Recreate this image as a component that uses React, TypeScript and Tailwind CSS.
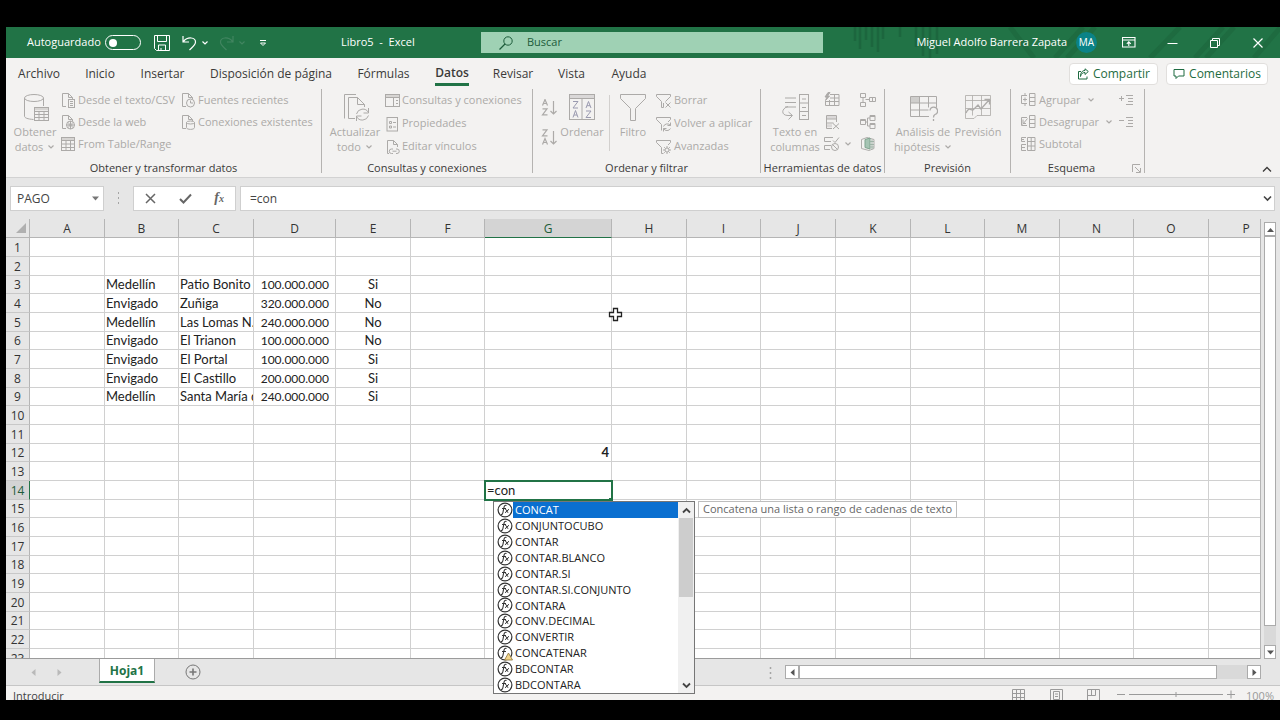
import type { ReactNode } from "react";

/* ---------- drawing helpers ---------- */

function Svg({ w, h, className = "", children }: { w: number; h: number; className?: string; children: ReactNode }) {
  return (
    <svg
      width={w}
      height={h}
      viewBox={`0 0 ${w} ${h}`}
      fill="none"
      stroke="currentColor"
      strokeWidth="1"
      className={`shrink-0 ${className}`}
      aria-hidden="true"
    >
      {children}
    </svg>
  );
}

const Chevron = ({ className = "" }: { className?: string }) => (
  <Svg w={8} h={6} className={className}>
    <path d="M1.500 1.500 4 4l2.500-2.500" strokeWidth="1.200" />
  </Svg>
);

/* ---------- small ribbon icons (16 x 16) ---------- */

const pageOutline = "M6 14.500H2.500v-13h6l4 4V7M8.500 1.500v4h4";

const icons = {
  textCsv: (
    <Svg w={16} h={16}>
      <path d={pageOutline} />
      <rect x="8.500" y="7.500" width="6" height="8" />
      <path d="M10 9.500h3M10 11.500h3M10 13.500h3" />
    </Svg>
  ),
  web: (
    <Svg w={16} h={16}>
      <path d={pageOutline} />
      <circle cx="10.500" cy="11" r="4" />
      <path d="M6.500 11h8M10.500 7v8M8.500 8.500c1 1.500 1 3.500 0 5M12.500 8.500c-1 1.500-1 3.500 0 5" />
    </Svg>
  ),
  table: (
    <Svg w={16} h={16}>
      <rect x="1.500" y="1.500" width="13" height="13" />
      <path d="M1.500 4.500h13M1.500 8h13M1.500 11.500h13M6 4.500v10M10.500 4.500v10" />
      <path d="M2 3h12" strokeWidth="2" opacity=".4" />
    </Svg>
  ),
  recent: (
    <Svg w={16} h={16}>
      <path d={pageOutline} />
      <circle cx="10.500" cy="11" r="4" />
      <path d="M10.500 8.500V11H13" />
    </Svg>
  ),
  existing: (
    <Svg w={16} h={16}>
      <path d={pageOutline} />
      <ellipse cx="10.500" cy="8.500" rx="4" ry="1.500" />
      <path d="M6.500 8.500v5c0 2.500 8 2.500 8 0v-5" />
    </Svg>
  ),
  queries: (
    <Svg w={16} h={16}>
      <rect x="1.500" y="1.500" width="14" height="12" />
      <path d="M1.500 4.500h14M9.500 4.500v9M12 7.500h2M12 10.500h2" />
      <path d="M2 3h13" strokeWidth="2" opacity=".4" />
    </Svg>
  ),
  properties: (
    <Svg w={16} h={16}>
      <rect x="3" y="1.500" width="10.500" height="13.500" />
      <path d="M5.500 5.500h2v2h-2zM5.500 10h2v2h-2zM9 6.500h3M9 11h3" />
    </Svg>
  ),
  links: (
    <Svg w={16} h={16}>
      <path d="M5 14.500H3.500v-13h6l4 4V8M9.500 1.500v4h4" />
      <path d="M9 14.500H7.500a2 2 0 0 1 0-4.500H9M12 10h1a2 2 0 0 1 0 4.500h-1M8.500 12.200h4" />
    </Svg>
  ),
  clear: (
    <Svg w={16} h={16}>
      <path d="M.5 1.500h14v2L9.500 8.500M.5 1.500v2l5 5v6h2V10M9.500 9.500l5 5M14.500 9.500l-5 5" />
    </Svg>
  ),
  reapply: (
    <Svg w={16} h={16}>
      <path d="M.5 1.500h14v2L12 6M.5 1.500v2l5 5v6" />
      <path d="M14.500 9.500a4 4 0 0 0-7 1M14.500 6.500v3h-3M7.500 12.500a4 4 0 0 0 7 0M7.500 15.500v-3h3" />
    </Svg>
  ),
  advanced: (
    <Svg w={16} h={16}>
      <path d="M.5 1.500h14v2L12 6M.5 1.500v2l5 5v6h2" />
      <circle cx="11" cy="11" r="2" />
      <path d="M11 7v2M11 13v2M7 11h2M13 11h2M8.200 8.200l1.400 1.400M12.400 12.400l1.400 1.400M13.800 8.200l-1.400 1.400M9.600 12.400l-1.400 1.400" />
    </Svg>
  ),
  flashFill: (
    <Svg w={16} h={16}>
      <path d="M6 2.500h9v11H1.500V9M10.500 2.500v11M6 6h9M1.500 9.500H15M5.500 8v5.500" />
      <path d="M4 .5 1 5h2L1.500 8.500 5.500 4h-2L6 .5z" fill="currentColor" />
    </Svg>
  ),
  duplicates: (
    <Svg w={16} h={16}>
      <path d="M8 14.500H2.500v-13h10V8M2.500 5h10M2.500 9h7" />
      <path d="M3 3.300h9M3 11.800h5" strokeWidth="3" opacity=".35" />
      <path d="m9 9.500 6 5.500M15 9.500 9 15" />
    </Svg>
  ),
  validation: (
    <Svg w={16} h={16}>
      <path d="M9 1.500H.5v4H7M7 9.500H.5v4H6M9 4.500l2 2 4-5" />
      <circle cx="11" cy="11" r="3.500" />
      <path d="m8.500 8.500 5 5" />
    </Svg>
  ),
  consolidate: (
    <Svg w={16} h={16}>
      <path d="M.5 1.500h5v4h-5zM.5 10.500h5v4h-5zM9.500 5.500h6v4h-6zM3 5.500v5M5.500 7.500h4M12.500 5.500v4" />
    </Svg>
  ),
  relations: (
    <Svg w={16} h={16}>
      <path d="M.5 5.500h5v5h-5zM10 1.500h5v5h-5zM10 9.500h5v5h-5zM5.500 8h2M10 4H7.500v8H10" />
      <path d="M10 2.500h5M10 10.500h5M.5 6.500h5" />
    </Svg>
  ),
  dataModel: (
    <Svg w={16} h={16}>
      <path d="M1.500 3.500 7 1.500l7 2v9l-5 2-7.500-2z" stroke="#b0aeac" />
      <path d="M5 3.500 10 2v11l-5-1.500z" fill="#a5c4b3" stroke="#7fa48f" />
      <path d="M10 5.500h4M10 8.500h4M10 11h4M12 3.500v10" stroke="#9fb3a7" />
    </Svg>
  ),
  group: (
    <Svg w={17} h={16}>
      <path d="M7 3.500H1.500v8H7M9.500 1.500h5.500v12H9.500zM9.500 5.500H15M9.500 9.500H15M3 7.500h4M5 5.500v4M5 1v2M5 12v2" />
    </Svg>
  ),
  ungroup: (
    <Svg w={17} h={16}>
      <path d="M7 3.500H1.500v8H7M9.500 1.500h5.500v12H9.500zM9.500 5.500H15M9.500 9.500H15M2.500 10.500l5-6M3 5.500v4h3" />
    </Svg>
  ),
  subtotal: (
    <Svg w={17} h={16}>
      <path d="M7.500 1.500H15v13H7.500zM7.500 5.500H15M7.500 10H15M11.200 1.500v13M6 1.500H1.500v4H5M1.500 3.500H4M6 8.500H1.500v6H6M1.500 11.500H5" />
    </Svg>
  ),
};

/* ---------- large ribbon icons (30 x 28) ---------- */

const big = {
  database: (
    <Svg w={30} h={28}>
      <ellipse cx="14" cy="5" rx="9.500" ry="3.500" />
      <path d="M4.500 5v18c0 2 3 3 9 3.500M23.500 5v8" />
      <rect x="14.500" y="14.500" width="14" height="13" fill="#f3f2f1" />
      <path d="M14.500 18.500h14M14.500 21.500h14M14.500 24.500h14M19 18.500v9M24 18.500v9" />
      <path d="M15 16h13" strokeWidth="2.500" opacity=".4" />
    </Svg>
  ),
  refresh: (
    <Svg w={30} h={28}>
      <path d="M16 1.500H4.500v24" />
      <path d="M15 25.500H8.500v-21h9l7 7V14M17.500 4.500v7h7" />
      <path d="M28.500 19.500a6.500 6.500 0 0 0-12 1.500M28.500 15v5h-5M16.500 23.500a6.500 6.500 0 0 0 12-1M16.500 28v-5h5" />
    </Svg>
  ),
  sort: (
    <Svg w={28} h={28}>
      <rect x="1.500" y="1.500" width="25" height="25" />
      <path d="M1.500 5.500h25M14 5.500v21" />
      <path d="M2 3.500h24" strokeWidth="3" opacity=".35" />
      <path d="M5 8.500h5l-5 6.500h5M5 24.500l2.500-7 2.500 7M6 22h3M18 15l2.500-6.500L23 15M19 12.700h3M18 18h5l-5 6.500h5" stroke="#9a9ab0" />
    </Svg>
  ),
  filter: (
    <Svg w={28} h={28}>
      <path d="M1.500 1.500h25v4l-10 10v12h-5v-12l-10-10z" />
    </Svg>
  ),
  textColumns: (
    <Svg w={30} h={28}>
      <path d="M5 5h11M5 9.500h11M5 14h11" strokeWidth="1.200" />
      <rect x="19.500" y="1.500" width="9" height="25" />
      <path d="M19.500 10h9M19.500 18.500h9M22 6h4M22 14.500h4M22 22.500h4" />
      <path d="M8 13.500c-7 2-7 9 0 9h4M8.500 19l4 3.500-4 4" />
    </Svg>
  ),
  whatIf: (
    <Svg w={30} h={28}>
      <path d="M2.500 3.500h26v11M2.500 3.500v20H21M2.500 10h26M2.500 17h18M11.500 3.500v20M20.500 3.500v11" />
      <path d="M3 4h8v6H3z" fill="currentColor" opacity=".5" stroke="none" />
      <path d="M22 17.500a3.800 3.800 0 1 1 5 4c-1 .5-1.500 1-1.500 3M25.500 26v2" strokeWidth="1.300" />
    </Svg>
  ),
  forecast: (
    <Svg w={30} h={28}>
      <path d="M2.500 2.500h25v20H14l-3 3H2.500zM2.500 7.500h25M2.500 15.500h25M9.500 2.500v20M18.500 2.500v20" opacity=".8" />
      <path d="M3 20c3-7 5-2 7-3l5-5 3 4 8-9M21.500 6.500h5v5" strokeWidth="1.300" />
    </Svg>
  ),
};

/* ---------- ribbon building blocks ---------- */

function Small({ icon, label, chevron = false, tight = false }: { icon: ReactNode; label: string; chevron?: boolean; tight?: boolean }) {
  return (
    <button className={`flex items-center gap-[2px] whitespace-nowrap ${tight ? "h-[22px]" : "h-[23px]"}`}>
      {icon}
      <span>{label}</span>
      {chevron && <Chevron className="ml-1" />}
    </button>
  );
}

function Big({ icon, lines, chevron = false, className }: { icon: ReactNode; lines: string[]; chevron?: boolean; className: string }) {
  return (
    <button className={`flex shrink-0 flex-col items-center self-start pt-[4px] leading-[15px] whitespace-nowrap ${className}`}>
      {icon}
      <span className="mt-[3px]">{lines[0]}</span>
      {lines[1] && (
        <span className="flex items-center gap-1">
          {lines[1]}
          {chevron && <Chevron />}
        </span>
      )}
    </button>
  );
}

function Group({ label, className, children, corner }: { label: string; className: string; children: ReactNode; corner?: ReactNode }) {
  return (
    <section aria-label={label} className={`mb-1 flex shrink-0 flex-col border-r border-[#b5b3b1] ${className}`}>
      <div className="flex h-[69px] shrink-0 items-start">{children}</div>
      <div className="flex h-[20px] shrink-0 items-center text-[#3b3a39]">
        <h2 className="flex-1 text-center whitespace-nowrap">{label}</h2>
        {corner}
      </div>
    </section>
  );
}

/* ---------- sheet data ---------- */

const columns = [
  { name: "A", width: "w-[75px]" },
  { name: "B", width: "w-[74px]" },
  { name: "C", width: "w-[75px]" },
  { name: "D", width: "w-[82px]" },
  { name: "E", width: "w-[75px]" },
  { name: "F", width: "w-[74px]" },
  { name: "G", width: "w-[127px]" },
  { name: "H", width: "w-[75px]" },
  { name: "I", width: "w-[74px]" },
  { name: "J", width: "w-[75px]" },
  { name: "K", width: "w-[75px]" },
  { name: "L", width: "w-[74px]" },
  { name: "M", width: "w-[75px]" },
  { name: "N", width: "w-[74px]" },
  { name: "O", width: "w-[75px]" },
  { name: "P", width: "w-[75px]" },
];

const cells: Record<string, string> = { G12: "4", G14: "=con" };
[
  ["Medellín", "Patio Bonito", "100.000.000", "Si"],
  ["Envigado", "Zuñiga", "320.000.000", "No"],
  ["Medellín", "Las Lomas N.", "240.000.000", "No"],
  ["Envigado", "El Trianon", "100.000.000", "No"],
  ["Envigado", "El Portal", "100.000.000", "Si"],
  ["Envigado", "El Castillo", "200.000.000", "Si"],
  ["Medellín", "Santa María de", "240.000.000", "Si"],
].forEach((row, i) => row.forEach((value, j) => (cells["BCDE"[j] + (i + 3)] = value)));

const align: Record<string, string> = {
  D: "text-right pr-[6px] text-[12px]",
  E: "text-center",
};

const functions = [
  "CONCAT", "CONJUNTOCUBO", "CONTAR", "CONTAR.BLANCO", "CONTAR.SI", "CONTAR.SI.CONJUNTO",
  "CONTARA", "CONV.DECIMAL", "CONVERTIR", "CONCATENAR", "BDCONTAR", "BDCONTARA",
];

const tabs = [
  { name: "Archivo", width: "w-[66px]" },
  { name: "Inicio", width: "w-[56px]" },
  { name: "Insertar", width: "w-[69px]" },
  { name: "Disposición de página", width: "w-[148px]" },
  { name: "Fórmulas", width: "w-[77px]" },
  { name: "Datos", width: "w-[60px]" },
  { name: "Revisar", width: "w-[62px]" },
  { name: "Vista", width: "w-[55px]" },
  { name: "Ayuda", width: "w-[60px]" },
];

/* ---------- page parts ---------- */

function TitleBar() {
  return (
    <header className="relative flex h-[31px] shrink-0 items-center overflow-hidden bg-[#217346] text-[11px] text-white">
      <svg className="absolute top-0 right-0" width="430" height="31" viewBox="0 0 430 31" fill="none" stroke="#1b613a" aria-hidden="true">
        <path d="M5 0v14M10 0v22M16 0v13M22 0v20M28 0v25M33 0v12M50 0v10M66 0v20M73 0v29M80 0v31M87 0v27" strokeWidth="2.500" opacity=".7" />
        <path d="M205 31l28-31M217 31l28-31M160 0l24 31M300 31l30-31M345 31l28-31M356 31l28-31M404 31l26-30" strokeWidth="5" opacity=".45" />
      </svg>
      <div className="relative flex w-[475px] shrink-0 items-center pl-[21px]">
        <span className="w-[78px] font-medium">Autoguardado</span>
        <button role="switch" aria-checked="false" aria-label="Autoguardado" className="flex h-[15px] w-[36px] items-center rounded-full border border-white pl-[3px]">
          <span className="size-[8px] rounded-full bg-white" />
        </button>
        <button aria-label="Guardar" className="ml-[13px]">
          <Svg w={16} h={16}>
            <path d="M.5 .5h15v15H2.500l-2-2zM3.500 .5v6h9v-6M4.500 15.500V10h7v5.500M7 15.500V13" />
          </Svg>
        </button>
        <button aria-label="Deshacer" className="ml-[12px] flex items-center gap-1">
          <Svg w={15} h={16}>
            <path d="M1 1v6h6M1.500 6.500C6 1 13.500 2.500 13.500 7c0 3-3 5-6 8" strokeWidth="1.200" />
          </Svg>
          <Chevron />
        </button>
        <button aria-label="Rehacer" className="ml-[10px] flex items-center gap-1 text-[#418560]">
          <Svg w={15} h={16}>
            <path d="M14 1v6H8M13.500 6.500C9 1 1.500 2.500 1.500 7c0 3 3 5 6 8" strokeWidth="1.200" />
          </Svg>
          <Chevron />
        </button>
        <button aria-label="Personalizar" className="ml-[13px]">
          <Svg w={8} h={8}>
            <path d="M1 1.500h6M1.500 4 4 6.500 6.500 4z" />
          </Svg>
        </button>
        <span className="ml-[74px] whitespace-pre">Libro5  -  Excel</span>
      </div>
      <label className="relative flex h-[21px] w-[342px] shrink-0 items-center bg-[#9fd1b4] pl-[18px] text-[#1d5c3a]">
        <Svg w={14} h={14}>
          <circle cx="9" cy="5" r="4.200" />
          <path d="M6 8 .5 13.500" strokeWidth="1.200" />
        </Svg>
        <input aria-label="Buscar" placeholder="Buscar" className="ml-[14px] min-w-0 flex-1 bg-transparent outline-none placeholder:text-[#1d5c3a]" />
      </label>
      <div className="relative ml-auto flex items-center">
        <span className="whitespace-nowrap">Miguel Adolfo Barrera Zapata</span>
        <span className="ml-[9px] flex size-[21px] items-center justify-center rounded-full bg-[#0b8387] text-[10px]">MA</span>
        <button aria-label="Opciones de la cinta" className="ml-[25px]">
          <Svg w={14} h={11}>
            <path d="M.5 .5h12.500v9.500H.500zM.5 3h12.500M6.800 9V5M4.800 6.800l2-2 2 2" strokeWidth="1.100" />
          </Svg>
        </button>
        <button aria-label="Minimizar" className="ml-[31px]">
          <Svg w={11} h={10}><path d="M.5 5.500h10" /></Svg>
        </button>
        <button aria-label="Restaurar" className="ml-[32px]">
          <Svg w={10} h={10}><path d="M.5 2.500h7v7h-7zM2.500 2.500v-2h7v7h-2" /></Svg>
        </button>
        <button aria-label="Cerrar" className="mr-[17px] ml-[33px]">
          <Svg w={10} h={10}><path d="m.5 .5 9 9M9.500 .5l-9 9" strokeWidth="1.200" /></Svg>
        </button>
      </div>
    </header>
  );
}

function TabRow() {
  return (
    <nav className="flex h-[31px] shrink-0 items-center text-[12px] text-[#3b3a39]">
      {tabs.map((t) => (
        <button key={t.name} className={`flex h-[31px] shrink-0 items-center justify-center whitespace-nowrap ${t.width}`}>
          {t.name === "Datos" ? (
            <span className="mt-[2px] border-b-[3px] border-[#217346] font-semibold leading-[20px]">{t.name}</span>
          ) : (
            t.name
          )}
        </button>
      ))}
      <div className="ml-auto flex shrink-0 gap-2 pr-[12px] font-medium text-[#1e6b41]">
        <button className="flex h-[22px] w-[89px] items-center justify-center gap-1 rounded-sm border border-[#e1dfdd] bg-white">
          <Svg w={12} h={12}>
            <path d="M4 3.500H1.500v7.500h8.500V8.500M3.500 8.500C4 5.500 6 4.500 8 4.500V6.500L11.300 3.500 8 .8v1.700C5 2.500 3.500 5 3.500 8.500z" />
          </Svg>
          Compartir
        </button>
        <button className="flex h-[22px] w-[102px] items-center justify-center gap-1 rounded-sm border border-[#e1dfdd] bg-white">
          <Svg w={12} h={12}><path d="M1 1.500h10v6.500H5.500L3 10.500V8H1z" /></Svg>
          Comentarios
        </button>
      </div>
    </nav>
  );
}

function SortIcon({ top, bottom }: { top: "A" | "Z"; bottom: "A" | "Z" }) {
  const a = "M1.500 6.500 4 .5l2.500 6M2.500 4.500h3";
  const z = "M1.500 .8h4.500l-4.500 6h5";
  return (
    <Svg w={18} h={17}>
      <path d={top === "A" ? a : z} strokeWidth="1.200" />
      <g transform="translate(0 9)"><path d={bottom === "A" ? a : z} strokeWidth="1.200" /></g>
      <path d="M12.500 2v13M9.500 12l3 3 3-3" strokeWidth="1.200" />
    </Svg>
  );
}

function Ribbon() {
  const plain = "flex h-[22px] items-center";
  return (
    <div className="flex h-[88px] shrink-0 text-[11px] text-[#acaaa8]">
      <Group label="Obtener y transformar datos" className="w-[316px]">
        <Big className="ml-2 w-[42px]" icon={big.database} lines={["Obtener", "datos"]} chevron />
        <div className="ml-1 flex w-[120px] shrink-0 flex-col">
          <Small tight icon={icons.textCsv} label="Desde el texto/CSV" />
          <Small tight icon={icons.web} label="Desde la web" />
          <Small tight icon={icons.table} label="From Table/Range" />
        </div>
        <div className="flex flex-col">
          <Small tight icon={icons.recent} label="Fuentes recientes" />
          <Small tight icon={icons.existing} label="Conexiones existentes" />
        </div>
      </Group>
      <Group label="Consultas y conexiones" className="w-[211px]">
        <Big className="ml-[7px] w-[52px]" icon={big.refresh} lines={["Actualizar", "todo"]} chevron />
        <div className="ml-[3px] flex flex-col">
          <Small icon={icons.queries} label="Consultas y conexiones" />
          <Small icon={icons.properties} label="Propiedades" />
          <Small icon={icons.links} label="Editar vínculos" />
        </div>
      </Group>
      <Group label="Ordenar y filtrar" className="w-[228px]">
        <div className="ml-2 flex w-[18px] shrink-0 flex-col gap-[13px] pt-[10px]">
          <button aria-label="Ordenar de A a Z"><SortIcon top="A" bottom="Z" /></button>
          <button aria-label="Ordenar de Z a A"><SortIcon top="Z" bottom="A" /></button>
        </div>
        <Big className="w-[46px]" icon={big.sort} lines={["Ordenar"]} />
        <div className="mt-[6px] ml-1 h-[56px] border-l border-[#d2d0ce]" />
        <Big className="ml-[3px] w-[40px]" icon={big.filter} lines={["Filtro"]} />
        <div className="ml-[3px] flex flex-col">
          <Small icon={icons.clear} label="Borrar" />
          <Small icon={icons.reapply} label="Volver a aplicar" />
          <Small icon={icons.advanced} label="Avanzadas" />
        </div>
      </Group>
      <Group label="Herramientas de datos" className="w-[124px]">
        <Big className="ml-2 w-[52px]" icon={big.textColumns} lines={["Texto en", "columnas"]} />
        <div className="ml-[3px] flex w-[36px] shrink-0 flex-col">
          <button aria-label="Relleno rápido" className={plain}>{icons.flashFill}</button>
          <button aria-label="Quitar duplicados" className={plain}>{icons.duplicates}</button>
          <button aria-label="Validación de datos" className={`${plain} gap-1`}>{icons.validation}<Chevron /></button>
        </div>
        <div className="flex flex-col">
          <button aria-label="Consolidar" className={plain}>{icons.consolidate}</button>
          <button aria-label="Relaciones" className={plain}>{icons.relations}</button>
          <button aria-label="Modelo de datos" className={plain}>{icons.dataModel}</button>
        </div>
      </Group>
      <Group label="Previsión" className="w-[126px]">
        <Big className="ml-2 w-[60px]" icon={big.whatIf} lines={["Análisis de", "hipótesis"]} chevron />
        <Big className="w-[50px]" icon={big.forecast} lines={["Previsión"]} />
      </Group>
      <Group
        label="Esquema"
        className="w-[134px]"
        corner={
          <button aria-label="Configuración de esquema" className="mr-[3px] text-[#acaaa8]">
            <Svg w={9} h={9}><path d="M.5 8V.5H8M3 3l5 5M8.500 4v4.500H4" /></Svg>
          </button>
        }
      >
        <div className="ml-[9px] flex w-[99px] shrink-0 flex-col">
          <Small tight icon={icons.group} label="Agrupar" chevron />
          <Small tight icon={icons.ungroup} label="Desagrupar" chevron />
          <Small tight icon={icons.subtotal} label="Subtotal" />
        </div>
        <div className="flex flex-col">
          <button aria-label="Mostrar detalle" className={plain}>
            <Svg w={15} h={12}><path d="M0 4.500h5M2.500 2v5M7 1.500h7M9 4.500h5M9 7.500h5M7 10.500h7" /></Svg>
          </button>
          <button aria-label="Ocultar detalle" className={plain}>
            <Svg w={15} h={12}><path d="M0 4.500h5M7 1.500h7M9 4.500h5M9 7.500h5M7 10.500h7" /></Svg>
          </button>
        </div>
      </Group>
      <button aria-label="Contraer la cinta" className="mr-[8px] mb-[4px] ml-auto self-end text-[#3b3a39]">
        <Svg w={10} h={7}><path d="m1 5.500 4-4 4 4" strokeWidth="1.300" /></Svg>
      </button>
    </div>
  );
}

function FormulaBar() {
  return (
    <div className="flex h-[42px] shrink-0 items-start border-t border-[#d2d2d2] bg-[#e6e6e6] pt-[8px] pr-[5px] pl-[4px] text-[12px] text-[#444]">
      <label className="flex h-[25px] w-[94px] shrink-0 items-center border border-[#cfcfcf] bg-white pr-[4px] pl-[6px]">
        <input aria-label="Cuadro de nombres" defaultValue="PAGO" className="w-0 flex-1 outline-none" />
        <Svg w={7} h={5}><path d="M0 .5h7L3.500 4.500z" fill="#777" stroke="none" /></Svg>
      </label>
      <Svg w={3} h={14} className="mt-[5px] mr-[13px] ml-[13px]"><path d="M1.500 1v13" stroke="#a5a5a5" strokeDasharray="2 3" /></Svg>
      <div className="flex h-[25px] w-[103px] shrink-0 items-center justify-between border border-[#cfcfcf] bg-white px-[11px] text-[#666]">
        <button aria-label="Cancelar"><Svg w={11} h={11}><path d="m1 1 9 9M10 1l-9 9" strokeWidth="1.500" /></Svg></button>
        <button aria-label="Aceptar"><Svg w={13} h={11}><path d="m1 6 3.500 3.500L12 1.500" strokeWidth="2" /></Svg></button>
        <button aria-label="Insertar función" className="font-['Liberation_Serif',serif] text-[14px] leading-[16px] font-bold italic">
          f<span className="text-[10px]">x</span>
        </button>
      </div>
      <label className="ml-1 flex h-[25px] min-w-0 flex-1 items-center border border-[#cfcfcf] bg-white pr-[2px] pl-[9px]">
        <input aria-label="Barra de fórmulas" defaultValue="=con" className="min-w-0 flex-1 outline-none" />
        <Svg w={9} h={7}><path d="m1 1.500 3.500 3.500L8 1.500" strokeWidth="1.600" /></Svg>
      </label>
    </div>
  );
}

function Sheet() {
  const rows = Array.from({ length: 23 }, (_, i) => i + 1);
  return (
    <div className="min-w-0 flex-1 overflow-hidden border-b border-[#9b9b9b]">
      <table className="w-[1254px] table-fixed border-separate border-spacing-0 font-['Lato','Open_Sans',sans-serif] text-[13px] leading-[17px] text-[#222]">
        <thead>
          <tr className="h-[19px] bg-[#e6e6e6] font-['Open_Sans',sans-serif] text-[12px] text-[#333]">
            <th className="w-[24px] border-r border-b border-[#b5b5b5] p-0" aria-label="Seleccionar todo">
              <Svg w={12} h={12} className="ml-[9px]"><path d="M11 1v10H1z" fill="#b0b0b0" stroke="none" /></Svg>
            </th>
            {columns.map((c) => (
              <th
                key={c.name}
                className={`border-r border-b p-0 font-normal ${c.width} ${
                  c.name === "G" ? "border-r-[#b5b5b5] border-b-[#217346] bg-[#d4d4d4] text-[#1e5c3a]" : "border-[#b5b5b5]"
                }`}
              >
                {c.name}
              </th>
            ))}
          </tr>
        </thead>
        <tbody>
          {rows.map((r) => (
            <tr key={r} className={r % 3 === 0 ? "h-[18px]" : "h-[19px]"}>
              <th
                className={`border-r border-b p-0 font-['Open_Sans',sans-serif] text-[12px] font-normal ${
                  r === 14 ? "border-r-[#217346] border-b-[#c8c8c8] bg-[#d4d4d4] text-[#1e5c3a]" : "border-r-[#b5b5b5] border-b-[#c8c8c8] bg-[#e6e6e6] text-[#333]"
                }`}
              >
                {r}
              </th>
              {columns.map((c) => {
                const id = c.name + r;
                const value = cells[id];
                if (id === "G14") {
                  return (
                    <td key={id} className="relative bg-white p-0 outline-2 -outline-offset-1 outline-[#217346]">
                      <input aria-label="Celda G14" defaultValue={value} className="block w-full pl-[2px] leading-[17px] outline-none" />
                      <span className="absolute -right-[1px] -bottom-[2px] size-[4px] bg-[#217346]" />
                    </td>
                  );
                }
                const style = id === "G12" ? "pr-[2px] text-right font-bold" : (align[c.name] ?? "pl-[1px]");
                return (
                  <td key={id} className={`overflow-hidden border-r border-b border-[#d0d0d0] bg-white p-0 align-bottom whitespace-nowrap ${style}`}>
                    {value}
                  </td>
                );
              })}
            </tr>
          ))}
        </tbody>
      </table>
    </div>
  );
}

function Arrow({ dir }: { dir: "up" | "down" | "left" | "right" }) {
  const d = { up: "M0 6h7L3.500 2z", down: "M0 1.500h7L3.500 5.500z", left: "M5.500 0v7L1.500 3.500z", right: "M1.500 0v7l4-3.500z" }[dir];
  return <Svg w={7} h={7}><path d={d} fill="#555" stroke="none" /></Svg>;
}

function VerticalScroll() {
  const btn = "flex h-[14px] shrink-0 items-center justify-center border border-[#ababab] bg-white";
  return (
    <div className="flex w-[20px] shrink-0 flex-col border-l border-[#b5b5b5] bg-[#e6e6e6] pt-[3px] pr-[4px] pl-[3px]">
      <button aria-label="Subir" className={btn}><Arrow dir="up" /></button>
      <div className="flex min-h-0 flex-1 flex-col bg-[#d9d9d9] pb-[19px]">
        <div className="flex-1 border border-[#ababab] bg-white" />
      </div>
      <button aria-label="Bajar" className={btn}><Arrow dir="down" /></button>
    </div>
  );
}

function FxIcon({ old }: { old: boolean }) {
  return (
    <Svg w={16} h={16} className="text-[#333]">
      <circle cx="8" cy="8" r="6.900" fill="#fff" strokeWidth="1.200" />
      <path d="M9.500 3.500c-1.500-.8-2.200.3-2.500 1.800L5.800 11c-.3 1.300-.9 1.700-1.800 1.300M5 6.500h4" strokeWidth="1.100" />
      {old ? (
        <path d="m11.500 8 4 7h-8z" fill="#f3d58a" stroke="#8a7136" strokeWidth=".8" />
      ) : (
        <path d="M8.300 7.500c1.700-.8 1.200 3.500 3 3M12 7.500c-1.500-.3-2.300 3.300-4 3" />
      )}
    </Svg>
  );
}

function Suggestions() {
  return (
    <div className="absolute top-[282px] left-[487px] flex items-start gap-[3px]">
      <div className="flex h-[193px] w-[202px] border border-[#767676] bg-white font-['Open_Sans',sans-serif] text-[11px] text-[#222]">
        <ul role="listbox" aria-label="Funciones" className="grid flex-1 auto-rows-fr pl-[3px]">
          {functions.map((f, i) => (
            <li key={f} role="option" aria-selected={i === 0} className="flex min-h-0 items-center leading-[16px]">
              <FxIcon old={f === "CONCATENAR"} />
              <span className={`flex-1 self-stretch pl-[2px] ${i === 0 ? "bg-[#0a6fd0] text-white" : ""}`}>{f}</span>
            </li>
          ))}
        </ul>
        <div className="flex w-[16px] flex-col items-center bg-[#f0f0f0]">
          <button aria-label="Anterior" className="flex h-[16px] items-center"><Svg w={9} h={7}><path d="m1 5.500 3.500-3.500L8 5.500" stroke="#444" strokeWidth="1.800" /></Svg></button>
          <div className="h-[79px] w-[14px] bg-[#cdcdcd]" />
          <button aria-label="Siguiente" className="mt-auto flex h-[16px] items-center"><Svg w={9} h={7}><path d="m1 1.500 3.500 3.500L8 1.500" stroke="#444" strokeWidth="1.800" /></Svg></button>
        </div>
      </div>
      <div role="tooltip" className="flex h-[17px] items-center border border-[#bdbdbd] bg-white px-[4px] text-[11px] whitespace-nowrap text-[#666]">
        Concatena una lista o rango de cadenas de texto
      </div>
    </div>
  );
}

function SheetTabs() {
  const btn = "flex h-[14px] w-[14px] shrink-0 items-center justify-center border border-[#ababab] bg-white";
  return (
    <div className="relative z-0 flex h-[26px] shrink-0 items-start bg-[#e6e6e6]">
      <div className="flex h-[26px] w-[93px] shrink-0 items-center gap-[19px] pl-[24px] opacity-30">
        <Arrow dir="left" />
        <Arrow dir="right" />
      </div>
      <button className="h-[24px] w-[56px] shrink-0 border-x border-b-2 border-x-[#ababab] border-b-[#217346] bg-white pt-[2px] text-[12px] font-bold text-[#217346]">Hoja1</button>
      <button aria-label="Hoja nueva" className="mt-[5px] ml-[30px]">
        <Svg w={16} h={16} className="text-[#777]"><circle cx="8" cy="8" r="7" /><path d="M8 4.500v7M4.500 8h7" strokeWidth="1.600" /></Svg>
      </button>
      <div className="ml-auto flex w-[511px] items-center pt-[6px]">
        <Svg w={3} h={13} className="mr-[13px]"><path d="M1.500 1v12" stroke="#a5a5a5" strokeWidth="1.500" strokeDasharray="2 3" /></Svg>
        <button aria-label="Izquierda" className={btn}><Arrow dir="left" /></button>
        <div className="flex h-[14px] flex-1 bg-[#d9d9d9] pr-[30px]">
          <div className="flex-1 border border-[#ababab] bg-white" />
        </div>
        <button aria-label="Derecha" className={btn}><Arrow dir="right" /></button>
        <span className="w-[19px]" />
      </div>
    </div>
  );
}

function StatusBar() {
  return (
    <footer className="flex h-[15px] shrink-0 items-start overflow-hidden border-t border-[#c6c6c6] bg-[#f3f2f1] pt-[2px] pr-[6px] pl-[7px] text-[11px] leading-[16px] text-[#444]">
      <span>Introducir</span>
      <div className="ml-auto flex shrink-0 items-start text-[#9a9a9a]">
        <button aria-label="Vista normal"><Svg w={13} h={13} className="mt-px"><path d="M.5 .5h12v12H.5zM.5 4.500h12M.5 8.500h12M4.500 .5v12M8.500 .5v12" /></Svg></button>
        <button aria-label="Diseño de página" className="ml-[25px]"><Svg w={13} h={13} className="mt-px"><path d="M.5 .5h12v12H.5zM3.500 2.500h6v8h-6zM5 5h3M5 7.500h3" /></Svg></button>
        <button aria-label="Vista previa de salto de página" className="ml-[24px]"><Svg w={13} h={13} className="mt-px"><path d="M.5 13V.5h12V13M4.500 .5v6M8.500 .5v6M.5 6.500h8" /></Svg></button>
        <button aria-label="Alejar" className="ml-[17px]"><Svg w={8} h={13}><path d="M0 6.500h8" /></Svg></button>
        <Svg w={94} h={13} className="mx-[4px]"><path d="M0 6.500h94M47 4v5" /></Svg>
        <button aria-label="Acercar"><Svg w={8} h={13}><path d="M0 6.500h8M4 2.500v8" /></Svg></button>
        <span className="ml-[11px]">100%</span>
      </div>
    </footer>
  );
}

export default function App() {
  return (
    <div className="flex h-screen flex-col overflow-hidden bg-black pt-[27px] pb-[20px] pl-[6px] font-['Open_Sans','Noto_Sans',sans-serif]">
      <div className="flex min-h-0 flex-1 flex-col bg-[#f3f2f1]">
        <TitleBar />
        <TabRow />
        <Ribbon />
        <FormulaBar />
        <main className="relative z-10 flex min-h-0 flex-1 bg-[#e6e6e6]">
          <Sheet />
          <VerticalScroll />
          <Suggestions />
          <Svg w={15} h={15} className="absolute top-[88px] left-[602px]">
            <path d="M5.500 1.500h4v4h4v4h-4v4h-4v-4h-4v-4h4z" fill="#fff" stroke="#222" strokeWidth="1.300" />
          </Svg>
        </main>
        <SheetTabs />
        <StatusBar />
      </div>
    </div>
  );
}
